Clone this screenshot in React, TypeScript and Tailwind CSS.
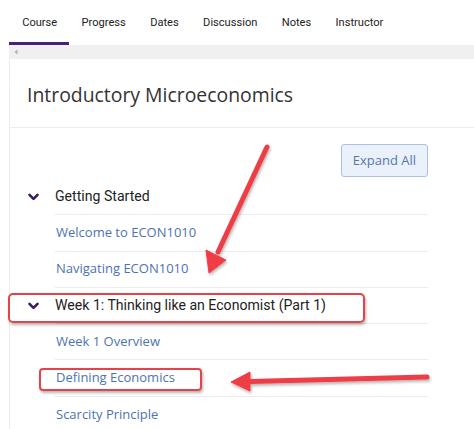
import React from "react";

const tabs = ["Course", "Progress", "Dates", "Discussion", "Notes", "Instructor"];

function Chevron() {
  return (
    <svg width="11" height="8" viewBox="0 0 11 8" className="shrink-0">
      <path d="M1.5 1.8 L5.5 5.8 L9.5 1.8" fill="none" stroke="#3b1d5e" strokeWidth="2.6" strokeLinecap="round" strokeLinejoin="round" />
    </svg>
  );
}

function Header({ text }: { text: string }) {
  return (
    <div className="flex items-center h-[36.3px]">
      <div className="w-[54px] pl-[27px] flex items-center">
        <Chevron />
      </div>
      <div className="flex-1 h-full flex items-center border-b border-[#ececec] mr-[46px] text-[14.1px] text-[#222] font-['Roboto',sans-serif]">
        {text}
      </div>
    </div>
  );
}

function Item({ text }: { text: string }) {
  return (
    <div className="ml-[54px] mr-[46px] h-[36.3px] flex items-center border-b border-[#ececec] pl-[1px] text-[13px] text-[#4d73b2] font-['Open_Sans',sans-serif]">
      {text}
    </div>
  );
}

export default function App() {
  return (
    <div className="relative w-[474px] h-[429px] overflow-hidden bg-white">
      <div className="flex pl-[10px] h-[42px] items-center pt-[4px] font-['Roboto',sans-serif] text-[11.1px] text-[#222]">
        {tabs.map((t) => (
          <div key={t} className="px-[12.2px]">
            {t}
          </div>
        ))}
      </div>
      <div className="ml-[9px] w-[60px] h-[3px] bg-[#4a2177]" />
      <div className="ml-[9px] h-[14px] bg-[#f0f0f0] flex items-center pl-[5px]">
        <svg width="4" height="6" viewBox="0 0 4 6">
          <path d="M3.5 0.5 L0.5 3 L3.5 5.5 Z" fill="#b0b0b0" />
        </svg>
      </div>
      <div className="ml-[9px] border-l border-[#ececec] h-[370px]">
        <div className="h-[69px] border-b border-[#ececec] flex items-center pl-[17px] pt-[4px] text-[19.4px] text-[#333] font-['Open_Sans',sans-serif]">
          Introductory Microeconomics
        </div>
        <div className="flex justify-end pr-[46px] pt-[16px]">
          <div className="w-[87px] h-[33px] rounded-[3px] border border-[#a9c2e2] bg-[#eaf1fb] flex items-center justify-center text-[13px] text-[#5677ad] font-['Open_Sans',sans-serif]">
            Expand All
          </div>
        </div>
        <div className="-ml-[9px] mt-[2px]">
          <Header text="Getting Started" />
          <Item text="Welcome to ECON1010" />
          <Item text="Navigating ECON1010" />
          <Header text="Week 1: Thinking like an Economist (Part 1)" />
          <Item text="Week 1 Overview" />
          <Item text="Defining Economics" />
          <Item text="Scarcity Principle" />
        </div>
      </div>

      <div className="absolute left-[8px] top-[293px] w-[357px] h-[30px] rounded-[5px] border-2 border-[#e2444a] shadow-[1px_2px_3px_rgba(0,0,0,0.3)]" />
      <div className="absolute left-[39px] top-[368px] w-[163px] h-[23px] rounded-[4px] border-2 border-[#e2444a] shadow-[1px_2px_3px_rgba(0,0,0,0.3)]" />

      <svg className="absolute left-0 top-0" width="474" height="429" viewBox="0 0 474 429">
        <defs>
          <filter id="sh" x="-20%" y="-20%" width="140%" height="140%">
            <feDropShadow dx="1" dy="2" stdDeviation="1.5" floodColor="#000" floodOpacity="0.3" />
          </filter>
        </defs>
        <g filter="url(#sh)" fill="#ef3e45" stroke="#ef3e45">
          <line x1="267" y1="147" x2="218" y2="252" strokeWidth="5" strokeLinecap="round" />
          <polygon points="209,273 206,250 226,260" strokeWidth="1" strokeLinejoin="round" />
          <line x1="427" y1="377" x2="250" y2="381.5" strokeWidth="5" strokeLinecap="round" />
          <polygon points="231,382 250,372 250,391" strokeWidth="1" strokeLinejoin="round" />
        </g>
      </svg>
    </div>
  );
}
